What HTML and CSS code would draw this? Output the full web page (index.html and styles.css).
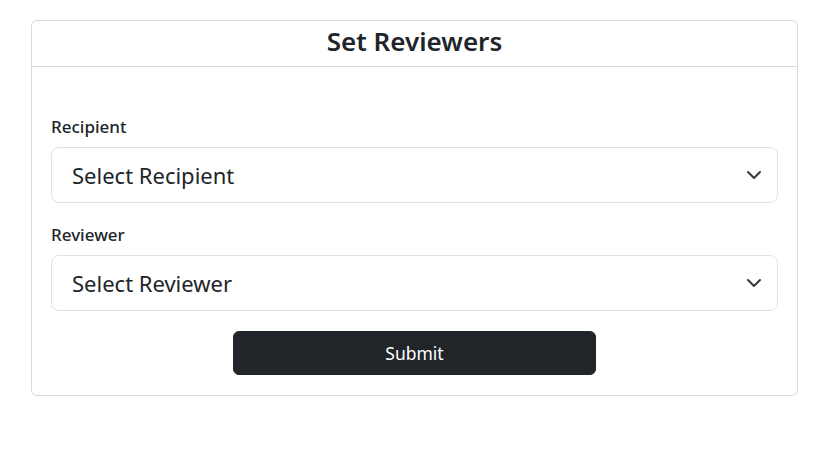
FILE: index.html
```html
<!DOCTYPE html>
<html lang="en">
<head>
<meta charset="utf-8">
<title>Set Reviewers</title>
<link rel="stylesheet" href="styles.css">
</head>
<body>
<div class="page">
  <div class="card">
    <div class="card-header">
      <h4 class="card-title">Set Reviewers</h4>
    </div>
    <form class="card-body">
      <div class="field">
        <label class="field-label" for="recipient">Recipient</label>
        <div class="select-wrap">
          <select class="form-select" id="recipient">
            <option>Select Recipient</option>
          </select>
          <svg class="chevron" viewBox="0 0 16 16" width="16" height="16" aria-hidden="true"><path d="M2 5l6 6 6-6" fill="none" stroke="#343a40" stroke-width="2" stroke-linecap="round" stroke-linejoin="round"/></svg>
        </div>
      </div>
      <div class="field">
        <label class="field-label" for="reviewer">Reviewer</label>
        <div class="select-wrap">
          <select class="form-select" id="reviewer">
            <option>Select Reviewer</option>
          </select>
          <svg class="chevron" viewBox="0 0 16 16" width="16" height="16" aria-hidden="true"><path d="M2 5l6 6 6-6" fill="none" stroke="#343a40" stroke-width="2" stroke-linecap="round" stroke-linejoin="round"/></svg>
        </div>
      </div>
      <div class="actions">
        <button type="button" class="btn-submit">Submit</button>
      </div>
    </form>
  </div>
</div>
</body>
</html>
```

FILE: styles.css
```css
* { box-sizing: border-box; }

html, body {
  margin: 0;
  background: #fff;
}

body {
  font-family: "Noto Sans", "Open Sans", sans-serif;
  color: #212529;
}

.page {
  padding: 20px 24px 0 31px;
}

.card {
  border: 1px solid #d9d9d9;
  border-radius: 6px;
  background: #fff;
}

.card-header {
  border-bottom: 1px solid #d9d9d9;
  padding: 4px 16px 8px;
  text-align: center;
}

.card-title {
  margin: 0;
  font-size: 26px;
  line-height: 33px;
  font-weight: 600;
  color: #212529;
}

.card-body {
  display: flex;
  flex-direction: column;
  gap: 20px;
  padding: 48px 19px 20px;
  margin: 0;
}

.field {
  display: flex;
  flex-direction: column;
  gap: 8px;
}

.field-label {
  font-size: 17px;
  line-height: 24px;
  font-weight: 500;
  color: #212529;
}

.select-wrap {
  position: relative;
}

.form-select {
  display: block;
  width: 100%;
  height: 56px;
  appearance: none;
  -webkit-appearance: none;
  border: 1px solid #dee2e6;
  border-radius: 8px;
  background: #fff;
  padding: 0 48px 0 20px;
  font-family: inherit;
  font-size: 22px;
  line-height: 33px;
  color: #212529;
  outline: none;
}

.chevron {
  position: absolute;
  right: 16px;
  top: 50%;
  width: 16px;
  height: 16px;
  margin-top: -8px;
  pointer-events: none;
}

.actions {
  display: flex;
  justify-content: center;
}

.btn-submit {
  width: 50%;
  height: 44px;
  border: 1px solid #212529;
  border-radius: 6px;
  background: #212529;
  color: #fff;
  font-family: inherit;
  font-size: 17.5px;
  line-height: 26px;
  font-weight: 400;
  padding: 0 12px;
  cursor: pointer;
}
```
